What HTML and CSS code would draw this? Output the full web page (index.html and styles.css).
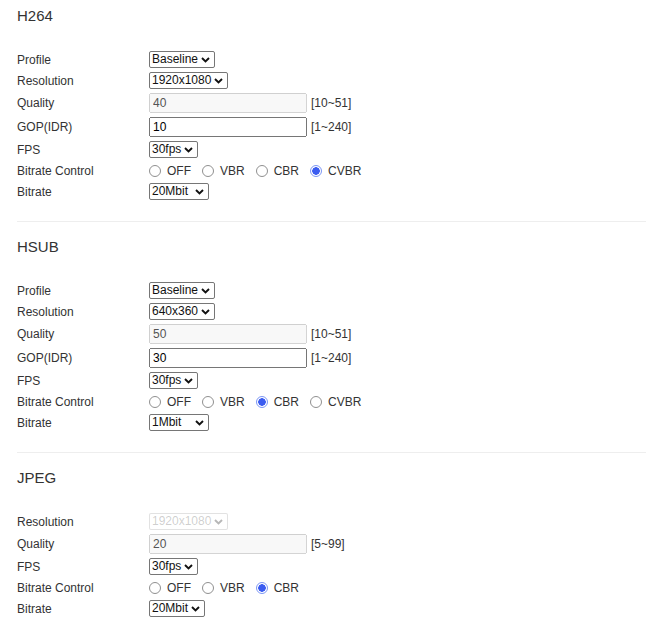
FILE: index.html
```html
<!DOCTYPE html>
<html lang="en">
<head>
    <meta charset="UTF-8">
    <meta name="viewport" content="width=device-width, initial-scale=1.0">
    <title>Video Encoder</title>
    <link rel="stylesheet" href="styles.css">
</head>
<body>
    <div class="encoder">
        <div class="section">
            <h2>H264</h2>
            <div class="row">
                <label>Profile</label>
                <span class="dropdown">
                    <select><option>Baseline</option><option>Main</option><option>High</option></select>
                    <svg class="caret" viewBox="0 0 9 6"><path d="M1 1l3.5 3.5L8 1"/></svg>
                </span>
            </div>
            <div class="row">
                <label>Resolution</label>
                <span class="dropdown">
                    <select><option>1920x1080</option><option>1280x720</option></select>
                    <svg class="caret" viewBox="0 0 9 6"><path d="M1 1l3.5 3.5L8 1"/></svg>
                </span>
            </div>
            <div class="row tall">
                <label>Quality</label>
                <input type="text" class="field" value="40" disabled>
                <span class="range">[10~51]</span>
            </div>
            <div class="row tall">
                <label>GOP(IDR)</label>
                <input type="text" class="field" value="10">
                <span class="range">[1~240]</span>
            </div>
            <div class="row">
                <label>FPS</label>
                <span class="dropdown">
                    <select><option>30fps</option><option>25fps</option><option>15fps</option></select>
                    <svg class="caret" viewBox="0 0 9 6"><path d="M1 1l3.5 3.5L8 1"/></svg>
                </span>
            </div>
            <div class="row">
                <label>Bitrate Control</label>
                <div class="radios">
                    <label class="choice"><input type="radio" name="h264-rc">OFF</label>
                    <label class="choice"><input type="radio" name="h264-rc">VBR</label>
                    <label class="choice"><input type="radio" name="h264-rc">CBR</label>
                    <label class="choice"><input type="radio" name="h264-rc" checked>CVBR</label>
                </div>
            </div>
            <div class="row">
                <label>Bitrate</label>
                <span class="dropdown">
                    <select><option>20Mbit</option><option>16Mbit</option><option>8Mbit</option><option>4Mbit</option><option>1Mbit</option><option>512Kbit</option></select>
                    <svg class="caret" viewBox="0 0 9 6"><path d="M1 1l3.5 3.5L8 1"/></svg>
                </span>
            </div>
        </div>

        <div class="section">
            <h2>HSUB</h2>
            <div class="row">
                <label>Profile</label>
                <span class="dropdown">
                    <select><option>Baseline</option><option>Main</option><option>High</option></select>
                    <svg class="caret" viewBox="0 0 9 6"><path d="M1 1l3.5 3.5L8 1"/></svg>
                </span>
            </div>
            <div class="row">
                <label>Resolution</label>
                <span class="dropdown">
                    <select><option>640x360</option><option>320x180</option></select>
                    <svg class="caret" viewBox="0 0 9 6"><path d="M1 1l3.5 3.5L8 1"/></svg>
                </span>
            </div>
            <div class="row tall">
                <label>Quality</label>
                <input type="text" class="field" value="50" disabled>
                <span class="range">[10~51]</span>
            </div>
            <div class="row tall">
                <label>GOP(IDR)</label>
                <input type="text" class="field" value="30">
                <span class="range">[1~240]</span>
            </div>
            <div class="row">
                <label>FPS</label>
                <span class="dropdown">
                    <select><option>30fps</option><option>25fps</option><option>15fps</option></select>
                    <svg class="caret" viewBox="0 0 9 6"><path d="M1 1l3.5 3.5L8 1"/></svg>
                </span>
            </div>
            <div class="row">
                <label>Bitrate Control</label>
                <div class="radios">
                    <label class="choice"><input type="radio" name="hsub-rc">OFF</label>
                    <label class="choice"><input type="radio" name="hsub-rc">VBR</label>
                    <label class="choice"><input type="radio" name="hsub-rc" checked>CBR</label>
                    <label class="choice"><input type="radio" name="hsub-rc">CVBR</label>
                </div>
            </div>
            <div class="row">
                <label>Bitrate</label>
                <span class="dropdown">
                    <select><option>1Mbit</option><option>2Mbit</option><option>4Mbit</option><option>512Kbit</option><option>256Kbit</option></select>
                    <svg class="caret" viewBox="0 0 9 6"><path d="M1 1l3.5 3.5L8 1"/></svg>
                </span>
            </div>
        </div>

        <div class="section">
            <h2>JPEG</h2>
            <div class="row">
                <label>Resolution</label>
                <span class="dropdown off">
                    <select disabled><option>1920x1080</option></select>
                    <svg class="caret" viewBox="0 0 9 6"><path d="M1 1l3.5 3.5L8 1"/></svg>
                </span>
            </div>
            <div class="row tall">
                <label>Quality</label>
                <input type="text" class="field" value="20" disabled>
                <span class="range">[5~99]</span>
            </div>
            <div class="row">
                <label>FPS</label>
                <span class="dropdown">
                    <select><option>30fps</option><option>25fps</option><option>15fps</option></select>
                    <svg class="caret" viewBox="0 0 9 6"><path d="M1 1l3.5 3.5L8 1"/></svg>
                </span>
            </div>
            <div class="row">
                <label>Bitrate Control</label>
                <div class="radios">
                    <label class="choice"><input type="radio" name="jpeg-rc">OFF</label>
                    <label class="choice"><input type="radio" name="jpeg-rc">VBR</label>
                    <label class="choice"><input type="radio" name="jpeg-rc" checked>CBR</label>
                </div>
            </div>
            <div class="row">
                <label>Bitrate</label>
                <span class="dropdown">
                    <select><option>20Mbit</option><option>16Mbit</option><option>10Mbit</option><option>8Mbit</option><option>4Mbit</option></select>
                    <svg class="caret" viewBox="0 0 9 6"><path d="M1 1l3.5 3.5L8 1"/></svg>
                </span>
            </div>
        </div>
    </div>
</body>
</html>
```

FILE: styles.css
```css
body {
    margin: 0;
    font-family: "Liberation Sans", Arial, sans-serif;
    font-size: 12px;
    color: #333;
    background: #fff;
}

.encoder {
    padding-left: 17px;
}

.section {
    padding: 16px 0 19px;
    border-bottom: 1px solid #eee;
}
.section:first-child {
    padding-top: 7px;
}
.section:last-child {
    border-bottom: none;
}

.section h2 {
    font-size: 15px;
    font-weight: normal;
    line-height: 17px;
    margin: 0 0 25px 0;
    color: #333;
}

.row {
    display: flex;
    align-items: center;
    min-height: 21px;
}
.row.tall {
    min-height: 24px;
}
.row > label {
    width: 132px;
    flex-shrink: 0;
}

select, input {
    font-family: inherit;
    font-size: 12px;
    margin: 0;
}

.dropdown {
    position: relative;
    display: inline-flex;
}
.dropdown select {
    appearance: none;
    box-sizing: border-box;
    height: 17px;
    line-height: 15px;
    padding: 0 15px 0 2px;
    border: 1px solid #767676;
    border-radius: 2px;
    background: #fff;
    color: #111;
}
.caret {
    position: absolute;
    right: 5px;
    top: 6px;
    width: 9px;
    height: 6px;
    pointer-events: none;
}
.caret path {
    fill: none;
    stroke: #111;
    stroke-width: 1.9;
}
.dropdown.off select {
    border-color: rgba(118, 118, 118, 0.3);
    color: rgba(16, 16, 16, 0.3);
}
.dropdown.off .caret path {
    stroke: rgba(16, 16, 16, 0.3);
}

.field {
    box-sizing: border-box;
    width: 158px;
    height: 20px;
}

.range {
    margin-left: 4px;
}

.radios {
    display: flex;
    align-items: center;
}
.choice {
    display: inline-flex;
    align-items: center;
    margin-right: 11px;
}
.choice input {
    appearance: none;
    box-sizing: border-box;
    width: 12px;
    height: 12px;
    margin: 0 6px 0 0;
    border: 1px solid #909090;
    border-radius: 50%;
    background: #fff;
}
.choice input:checked {
    border-color: #7d97f5;
    background: radial-gradient(circle, #3b5cf0 0, #3b5cf0 3.5px, #fff 4px);
}
```
